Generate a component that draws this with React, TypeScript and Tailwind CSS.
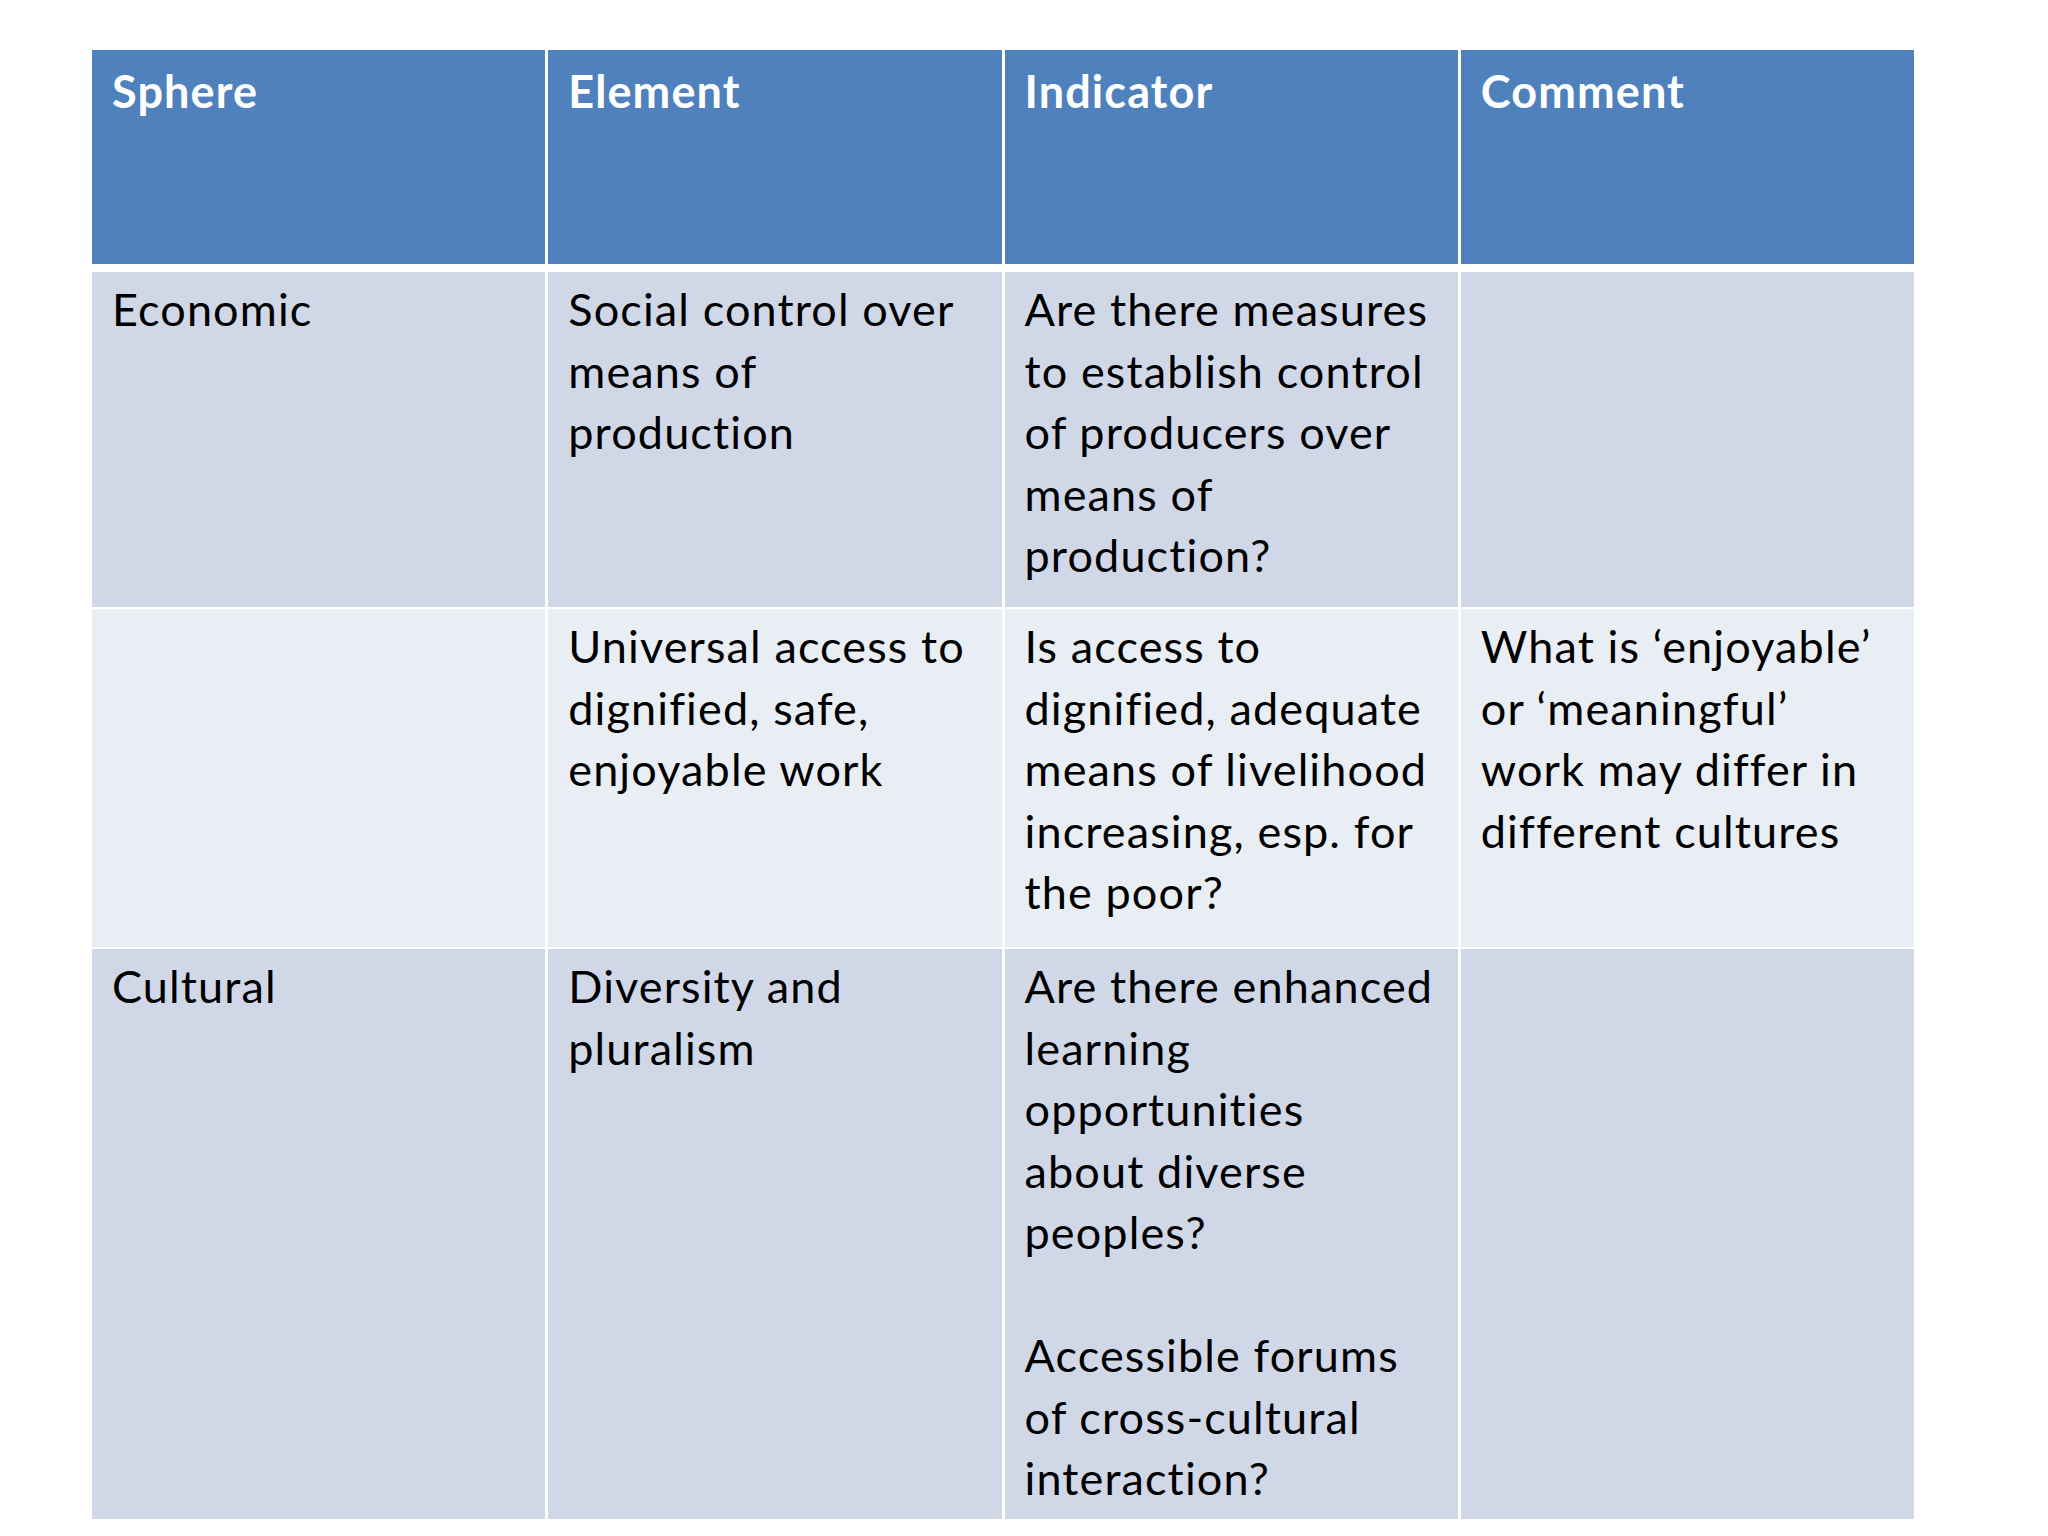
type Row = {
  bg: string;
  height: string;
  cells: string[][];
};

const font = { fontFamily: 'Lato, "Open Sans", sans-serif' };

const header = ['Sphere', 'Element', 'Indicator', 'Comment'];

const rows: Row[] = [
  {
    bg: 'bg-[#d0d8e8]',
    height: 'h-[335px]',
    cells: [
      ['Economic'],
      ['Social control over', 'means of', 'production'],
      ['Are there measures', 'to establish control', 'of producers over', 'means of', 'production?'],
      [],
    ],
  },
  {
    bg: 'bg-[#e9edf4]',
    height: 'h-[338px]',
    cells: [
      [],
      ['Universal access to', 'dignified, safe,', 'enjoyable work'],
      ['Is access to', 'dignified, adequate', 'means of livelihood', 'increasing, esp. for', 'the poor?'],
      ['What is \u2018enjoyable\u2019', 'or \u2018meaningful\u2019', 'work may differ in', 'different cultures'],
    ],
  },
  {
    bg: 'bg-[#d0d8e8]',
    height: 'h-[570px]',
    cells: [
      ['Cultural'],
      ['Diversity and', 'pluralism'],
      [
        'Are there enhanced',
        'learning',
        'opportunities',
        'about diverse',
        'peoples?',
        '',
        'Accessible forums',
        'of cross-cultural',
        'interaction?',
      ],
      [],
    ],
  },
];

function Cell({ lines, bg, height }: { lines: string[]; bg: string; height: string }) {
  return (
    <div
      className={`${bg} ${height} pl-[20px] pt-[7px] text-black text-[45px] leading-[61.5px] tracking-[0.025em]`}
    >
      {lines.map((line, i) => (
        <div key={i} className="whitespace-nowrap h-[61.5px]">
          {line}
        </div>
      ))}
    </div>
  );
}

export default function App() {
  return (
    <div className="w-[2048px] h-[1536px] bg-white pt-[50px] pl-[92px]" style={font}>
      <div className="w-[1822px] flex flex-col">
        {/* header row */}
        <div className="grid grid-cols-4 gap-x-[3px]">
          {header.map((h) => (
            <div
              key={h}
              className="bg-[#4f81bd] h-[214px] pl-[20px] pt-[11px] text-white font-bold text-[45px] leading-[61.5px] tracking-[0.025em]"
            >
              {h}
            </div>
          ))}
        </div>

        {rows.map((row, r) => (
          <div key={r} className={`grid grid-cols-4 gap-x-[3px] ${r === 0 ? 'mt-[8px]' : 'mt-[2px]'}`}>
            {row.cells.map((lines, c) => (
              <Cell key={c} lines={lines} bg={row.bg} height={row.height} />
            ))}
          </div>
        ))}
      </div>
    </div>
  );
}
